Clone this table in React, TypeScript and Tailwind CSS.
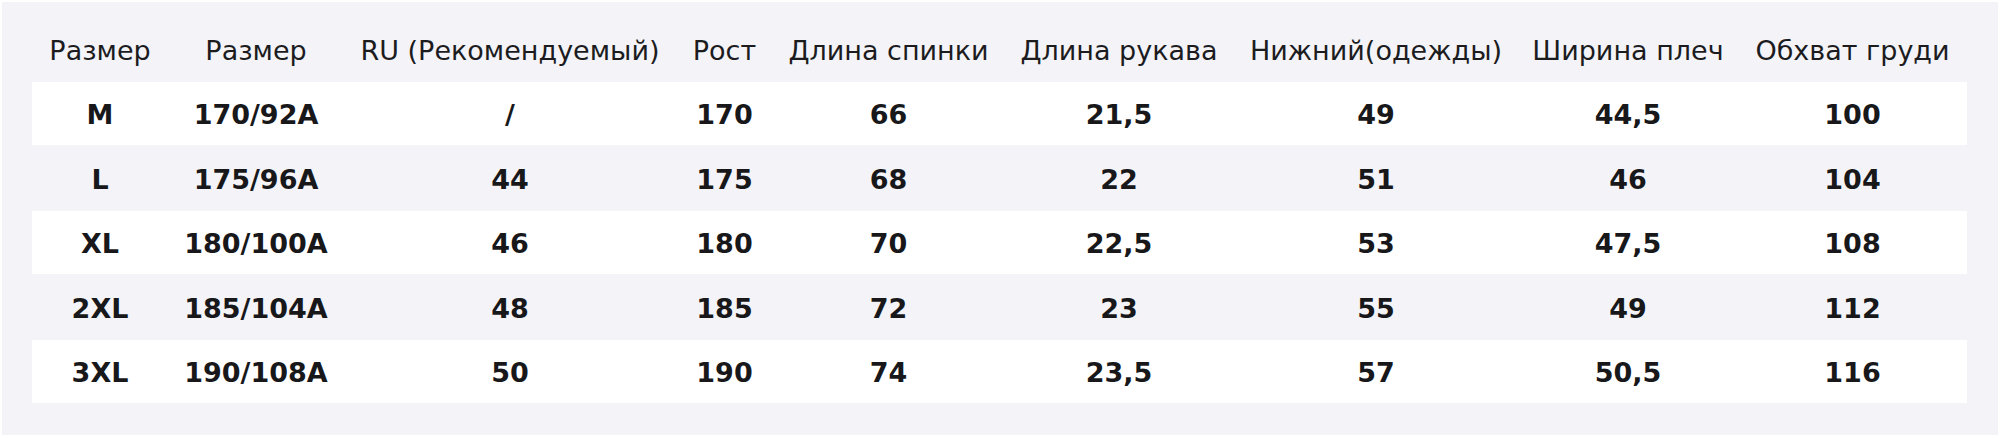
const headers = [
  "Размер",
  "Размер",
  "RU (Рекомендуемый)",
  "Рост",
  "Длина спинки",
  "Длина рукава",
  "Нижний(одежды)",
  "Ширина плеч",
  "Обхват груди",
];

const rows: string[][] = [
  ["M", "170/92A", "/", "170", "66", "21,5", "49", "44,5", "100"],
  ["L", "175/96A", "44", "175", "68", "22", "51", "46", "104"],
  ["XL", "180/100A", "46", "180", "70", "22,5", "53", "47,5", "108"],
  ["2XL", "185/104A", "48", "185", "72", "23", "55", "49", "112"],
  ["3XL", "190/108A", "50", "190", "74", "23,5", "57", "50,5", "116"],
];

// ширины колонок сняты со скриншота
const cols =
  "grid grid-cols-[136px_176px_332px_97px_231px_230px_284px_220px_229px]";

export default function App() {
  return (
    <div className="bg-white p-[2px] w-[2000px] h-[438px] font-['DejaVu_Sans',sans-serif]">
      <div className="bg-[#f4f4f8] h-[433px] pl-[30px] pr-[31px]">
        {/* Шапка таблицы */}
        <div className={`${cols} h-[80px] pt-[16px] items-center`}>
          {headers.map((h, i) => (
            <div
              key={`h-${i}`}
              className="text-center text-[27px] leading-none text-[#1c1c1f] whitespace-nowrap"
            >
              {h}
            </div>
          ))}
        </div>

        {/* Строки с размерами */}
        {rows.map((row, r) => (
          <div
            key={row[0]}
            className={`${cols} items-center pt-[2px] ${
              r % 2 === 0 ? "bg-white h-[63px]" : "bg-[#f4f4f8] h-[66px]"
            }`}
          >
            {row.map((v, c) => (
              <div
                key={`${row[0]}-${c}`}
                className="text-center text-[27px] leading-none font-bold text-[#18181b] whitespace-nowrap"
              >
                {v}
              </div>
            ))}
          </div>
        ))}
      </div>
    </div>
  );
}
